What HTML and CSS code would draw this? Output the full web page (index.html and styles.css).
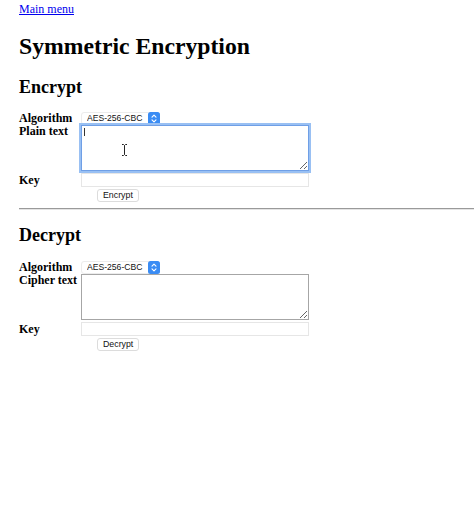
FILE: index.html
```html
<!DOCTYPE html>
<html lang="en">
<head>
<meta charset="utf-8">
<title>Symmetric Encryption</title>
<link rel="stylesheet" href="styles.css">
</head>
<body>
<a class="menu-link" href="#">Main menu</a>
<h1 class="title">Symmetric Encryption</h1>

<h2 class="section-title">Encrypt</h2>
<form class="crypt-form">
  <label class="field-label">Algorithm</label>
  <span class="select-wrap">
    <select class="algo-select"><option>AES-256-CBC</option></select>
    <svg class="stepper" width="12" height="13" viewBox="0 0 12 13"><rect x="0" y="0" width="12" height="13" rx="2.5" fill="#3a8cf4"/><path d="M4 5.2 L6 3.2 L8 5.2 M4 7.8 L6 9.8 L8 7.8" stroke="#fff" stroke-width="1.1" fill="none" stroke-linecap="round" stroke-linejoin="round"/></svg>
  </span>
  <label class="field-label">Plain text</label>
  <span class="area-wrap">
    <textarea class="text-area is-focused"></textarea>
    <span class="caret"></span>
    <svg class="ibeam" width="7" height="12" viewBox="0 0 7 12"><path d="M1 0.5 H2.5 L3.5 1.5 L4.5 0.5 H6 M3.5 1.5 V10.5 M1 11.5 H2.5 L3.5 10.5 L4.5 11.5 H6" stroke="#222" stroke-width="1" fill="none"/></svg>
  </span>
  <label class="field-label key-label">Key</label>
  <input class="key-input" type="text">
  <span></span>
  <span><button class="action-btn" type="button">Encrypt</button></span>
</form>

<hr class="divider">

<h2 class="section-title second">Decrypt</h2>
<form class="crypt-form">
  <label class="field-label">Algorithm</label>
  <span class="select-wrap">
    <select class="algo-select"><option>AES-256-CBC</option></select>
    <svg class="stepper" width="12" height="13" viewBox="0 0 12 13"><rect x="0" y="0" width="12" height="13" rx="2.5" fill="#3a8cf4"/><path d="M4 5.2 L6 3.2 L8 5.2 M4 7.8 L6 9.8 L8 7.8" stroke="#fff" stroke-width="1.1" fill="none" stroke-linecap="round" stroke-linejoin="round"/></svg>
  </span>
  <label class="field-label">Cipher text</label>
  <span class="area-wrap">
    <textarea class="text-area"></textarea>
  </span>
  <label class="field-label key-label">Key</label>
  <input class="key-input" type="text">
  <span></span>
  <span><button class="action-btn" type="button">Decrypt</button></span>
</form>
</body>
</html>
```
FILE: styles.css
```css
html, body {
  margin: 0;
  padding: 0;
  background: #fff;
}
body {
  padding: 2px 0 0 19px;
  font-family: "Liberation Serif", "Times New Roman", serif;
  color: #000;
}
.menu-link {
  display: block;
  width: max-content;
  font-size: 12px;
  line-height: 14px;
  color: #0000ee;
  text-decoration: underline;
}
.title {
  margin: 16px 0 0;
  font-size: 23.7px;
  line-height: 28px;
  font-weight: bold;
}
.section-title {
  margin: 17px 0 14px;
  font-size: 18px;
  line-height: 21px;
  font-weight: bold;
}
.section-title.second {
  margin-top: 15px;
  margin-bottom: 15px;
}
.crypt-form {
  display: grid;
  grid-template-columns: 62px 228px;
  align-items: start;
  margin: 0;
}
.field-label {
  font-size: 12px;
  line-height: 13px;
  font-weight: bold;
}
.key-label {
  margin-top: 2px;
  line-height: 14px;
}
.select-wrap {
  position: relative;
  display: block;
  width: 79px;
  height: 13px;
}
.algo-select {
  appearance: none;
  -webkit-appearance: none;
  display: block;
  box-sizing: border-box;
  width: 79px;
  height: 13px;
  margin: 0;
  padding: 0 0 0 5px;
  border: 1px solid #ececec;
  border-radius: 3px;
  background: #fff;
  font-family: "Liberation Sans", Arial, sans-serif;
  font-size: 8.6px;
  line-height: 11px;
  color: #111;
}
.stepper {
  position: absolute;
  right: 0;
  top: 0;
}
.area-wrap {
  position: relative;
  display: block;
  width: 228px;
  height: 46px;
}
.text-area {
  display: block;
  box-sizing: border-box;
  width: 228px;
  height: 46px;
  margin: 0;
  padding: 2px;
  border: 1px solid #a6a6a6;
  background: #fff;
  resize: both;
  font-family: "Liberation Mono", monospace;
  font-size: 9px;
}
.text-area.is-focused {
  border: 1px solid #6f9fe6;
  outline: none;
  box-shadow: 0 0 0 2px #99c0f3;
}
.caret {
  position: absolute;
  left: 3px;
  top: 3px;
  width: 1px;
  height: 8px;
  background: #333;
}
.ibeam {
  position: absolute;
  left: 40px;
  top: 19px;
}
.key-input {
  display: block;
  box-sizing: border-box;
  width: 228px;
  height: 14px;
  margin: 2px 0 0;
  padding: 0 2px;
  border: 1px solid #e6e6e6;
  background: #fff;
  font-size: 9px;
}
.action-btn {
  display: block;
  box-sizing: border-box;
  height: 13px;
  margin: 2px 0 0 16px;
  padding: 0 5px;
  border: 1px solid #dcdcdc;
  border-radius: 3px;
  background: #fff;
  font-family: "Liberation Sans", Arial, sans-serif;
  font-size: 8.8px;
  line-height: 11px;
  color: #111;
}
.divider {
  margin: 6px 0 0;
  height: 0;
  border: 0;
  border-top: 1px solid #9a9a9a;
  border-bottom: 1px solid #e4e4e4;
}
```
